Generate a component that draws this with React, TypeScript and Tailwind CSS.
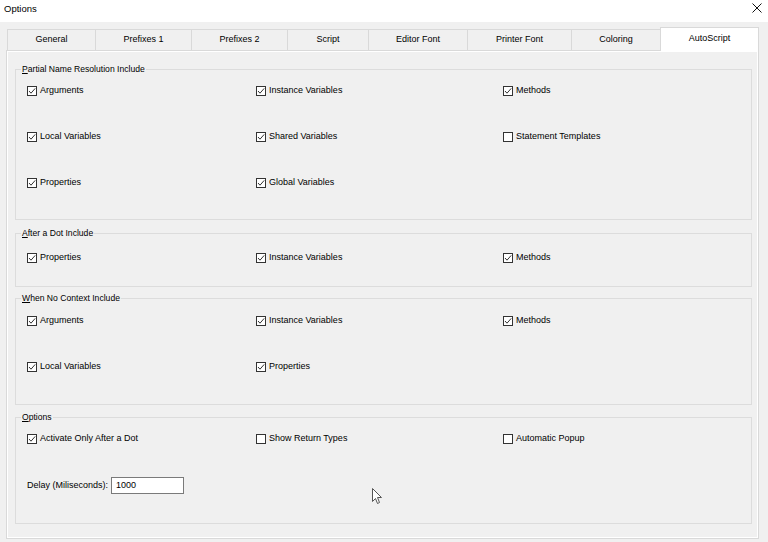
import React from "react";

type Item = { label: string; checked: boolean };

interface Group {
  title: string;
  key: string;
  rest: string;
  boxClass: string;
  rowsClass: string;
  rows: Item[][];
}

const tabs = [
  { label: "General", w: "w-[89px]" },
  { label: "Prefixes 1", w: "w-[97px]" },
  { label: "Prefixes 2", w: "w-[97px]" },
  { label: "Script", w: "w-[82px]" },
  { label: "Editor Font", w: "w-[100px]" },
  { label: "Printer Font", w: "w-[105px]" },
  { label: "Coloring", w: "w-[90px]" },
];

const groups: Group[] = [
  {
    title: "Partial Name Resolution Include",
    key: "P",
    rest: "artial Name Resolution Include",
    boxClass: "mt-[18px] h-[151px]",
    rowsClass: "mt-[8px] gap-[33px]",
    rows: [
      [
        { label: "Arguments", checked: true },
        { label: "Instance Variables", checked: true },
        { label: "Methods", checked: true },
      ],
      [
        { label: "Local Variables", checked: true },
        { label: "Shared Variables", checked: true },
        { label: "Statement Templates", checked: false },
      ],
      [
        { label: "Properties", checked: true },
        { label: "Global Variables", checked: true },
      ],
    ],
  },
  {
    title: "After a Dot Include",
    key: "A",
    rest: "fter a Dot Include",
    boxClass: "mt-[13px] h-[54px]",
    rowsClass: "mt-[11px] gap-[33px]",
    rows: [
      [
        { label: "Properties", checked: true },
        { label: "Instance Variables", checked: true },
        { label: "Methods", checked: true },
      ],
    ],
  },
  {
    title: "When No Context Include",
    key: "W",
    rest: "hen No Context Include",
    boxClass: "mt-[11px] h-[107px]",
    rowsClass: "mt-[9px] gap-[33px]",
    rows: [
      [
        { label: "Arguments", checked: true },
        { label: "Instance Variables", checked: true },
        { label: "Methods", checked: true },
      ],
      [
        { label: "Local Variables", checked: true },
        { label: "Properties", checked: true },
      ],
    ],
  },
];

function CheckBox({ checked }: { checked: boolean }) {
  return (
    <svg width="10" height="10" viewBox="0 0 10 10" className="shrink-0">
      <rect x="0.5" y="0.5" width="9" height="9" fill="#fff" stroke="#333" />
      {checked && (
        <path d="M2 5 L4 7.2 L8.2 2.4" fill="none" stroke="#333" strokeWidth="1" />
      )}
    </svg>
  );
}

function Check({ item }: { item: Item }) {
  return (
    <div className="flex items-center gap-[3px] h-[13px]">
      <CheckBox checked={item.checked} />
      <span className="leading-[13px]">{item.label}</span>
    </div>
  );
}

function GroupLabel({ k, rest }: { k: string; rest: string }) {
  return (
    <div className="-mt-[7px] -ml-[6px] h-[13px] leading-[13px] text-[8.6px]">
      <span className="bg-[#f0f0f0] px-[1px]">
        <span className="underline underline-offset-1">{k}</span>
        {rest}
      </span>
    </div>
  );
}

function Row({ items }: { items: Item[] }) {
  return (
    <div className="grid grid-cols-[229px_247px_1fr]">
      {items.map((it) => (
        <Check key={it.label} item={it} />
      ))}
    </div>
  );
}

export default function App() {
  return (
    <div
      className="relative w-[768px] h-[542px] bg-[#f0f0f0] text-black text-[9px] overflow-hidden"
      style={{ fontFamily: '"Liberation Sans", Arial, sans-serif' }}
    >
      {/* title bar */}
      <div className="h-[22px] bg-white flex items-center justify-between pl-[4px] pr-[6px]">
        <span className="text-[9.5px] -mt-[3px]">Options</span>
        <svg width="10" height="10" viewBox="0 0 10 10" className="-mt-[6px]">
          <path d="M0.5 0.5 L9.5 9.5 M9.5 0.5 L0.5 9.5" stroke="#111" strokeWidth="1" />
        </svg>
      </div>

      <div className="px-[6px] pt-[5px]">
        {/* tabs */}
        <div className="flex items-end pl-[1px] h-[23px]">
          {tabs.map((t, i) => (
            <div
              key={t.label}
              className={`${t.w} ${i > 0 ? "-ml-px" : ""} h-[21px] border border-b-0 border-[#d9d9d9] bg-[#f0f0f0] flex items-center justify-center`}
            >
              {t.label}
            </div>
          ))}
          <div className="w-[99px] -ml-px h-[24px] -mb-px relative z-10 border border-b-0 border-[#d9d9d9] bg-white flex justify-center pt-[4px]">
            AutoScript
          </div>
        </div>

        {/* panel */}
        <div className="w-[753px] h-[489px] border border-[#d9d9d9] shadow-[inset_1px_1px_0_#fff,inset_-1px_-1px_0_#fff] pl-[8px] pr-[6px] flex flex-col">
          {groups.map((g) => (
            <div key={g.title} className={`${g.boxClass} border border-[#dcdcdc] pl-[11px]`}>
              <GroupLabel k={g.key} rest={g.rest} />
              <div className={`${g.rowsClass} flex flex-col`}>
                {g.rows.map((r, i) => (
                  <Row key={i} items={r} />
                ))}
              </div>
            </div>
          ))}

          {/* options group */}
          <div className="mt-[12px] h-[107px] border border-[#dcdcdc] pl-[11px]">
            <GroupLabel k="O" rest="ptions" />
            <div className="mt-[8px]">
              <Row
                items={[
                  { label: "Activate Only After a Dot", checked: true },
                  { label: "Show Return Types", checked: false },
                  { label: "Automatic Popup", checked: false },
                ]}
              />
            </div>
            <div className="mt-[32px] flex items-center">
              <span className="w-[84px]">Delay (Miliseconds):</span>
              <div className="w-[73px] h-[17px] border border-[#7a7a7a] bg-white flex items-center pl-[4px]">
                1000
              </div>
            </div>
          </div>
        </div>
      </div>

      {/* mouse pointer */}
      <svg
        width="12"
        height="18"
        viewBox="0 0 12 18"
        className="absolute left-[372px] top-[488px]"
      >
        <path
          d="M0.5 0.5 L0.5 13.5 L3.5 10.5 L5.5 15.5 L7.5 14.5 L5.5 9.5 L9.5 9.5 Z"
          fill="#fff"
          stroke="#555"
          strokeWidth="1"
        />
      </svg>
    </div>
  );
}
